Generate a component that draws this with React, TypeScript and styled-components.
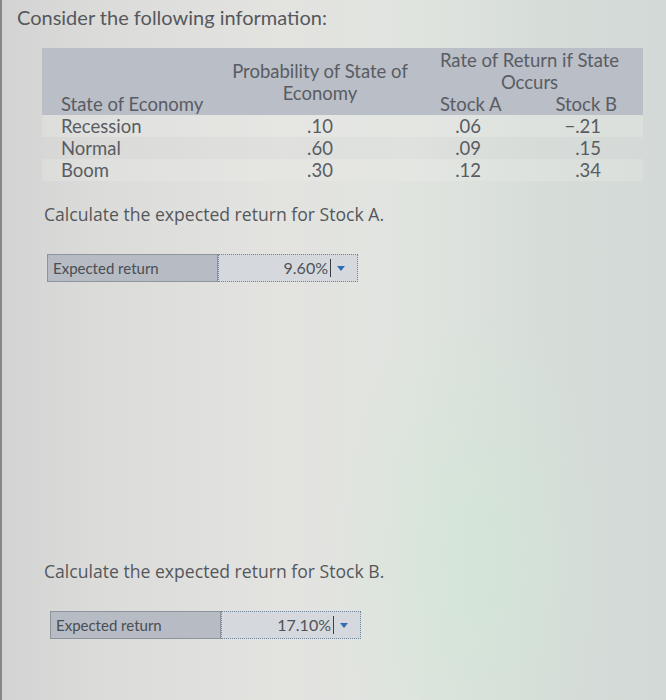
import React from "react";
import styled, { createGlobalStyle } from "styled-components";

const Global = createGlobalStyle`
  html, body { margin: 0; padding: 0; }
  body { background: #d9dad8; }
`;

const Page = styled.div`
  width: 664px;
  height: 700px;
  border-left: 2px solid #84868a;
  overflow: hidden;
  font-family: Lato, "Liberation Sans", sans-serif;
  color: #595c62;
  background:
    radial-gradient(ellipse 140px 260px at 470px 560px, rgba(205, 232, 212, 0.55), rgba(205, 232, 212, 0) 100%),
    linear-gradient(90deg, #d2d3d2 0%, #dbdcda 14%, #e3e3e0 42%, #e0e4df 62%, #d6ddd9 82%, #d3d9d6 100%);
`;

const Title = styled.div`
  font-size: 20px;
  line-height: 22px;
  padding: 6px 0 0 15px;
  color: #56585c;
`;

const Table = styled.div`
  margin: 20px 0 0 40px;
  width: 601px;
  font-size: 18.5px;
  line-height: 22px;
`;

const Header = styled.div`
  display: grid;
  grid-template-columns: 178px 200px 105px 118px;
  grid-template-rows: 22px 22px 22px;
  background: #b9bec7;
  padding-top: 1px;
`;

const HeadCell = styled.div<{ $col: string; $row: string; $align?: string; $pl?: number; $pr?: number; $pb?: number }>`
  grid-column: ${(p) => p.$col};
  grid-row: ${(p) => p.$row};
  align-self: end;
  white-space: nowrap;
  text-align: ${(p) => p.$align || "left"};
  padding-left: ${(p) => p.$pl || 0}px;
  padding-right: ${(p) => p.$pr || 0}px;
  padding-bottom: ${(p) => p.$pb || 0}px;
`;

const Row = styled.div<{ $shade: string }>`
  display: grid;
  grid-template-columns: 178px 200px 105px 118px;
  height: 22px;
  background: ${(p) => p.$shade};
`;

const Cell = styled.div<{ $align?: string; $pl?: number; $pr?: number }>`
  text-align: ${(p) => p.$align || "left"};
  padding-left: ${(p) => p.$pl || 0}px;
  padding-right: ${(p) => p.$pr || 0}px;
`;

const Question = styled.div<{ $mt: number }>`
  margin: ${(p) => p.$mt}px 0 0 42px;
  font-family: "Open Sans", "Liberation Sans", sans-serif;
  font-size: 17.6px;
  line-height: 22px;
  color: #55575b;
`;

const AnswerRow = styled.div<{ $ml: number }>`
  display: flex;
  margin: 29px 0 0 ${(p) => p.$ml}px;
  height: 28px;
`;

const Label = styled.div`
  width: 171px;
  box-sizing: border-box;
  border: 1px solid #8e949c;
  background: #b7bcc4;
  font-size: 15px;
  line-height: 26px;
  padding-left: 5px;
  color: #4a4d53;
`;

const InputBox = styled.div`
  width: 140px;
  box-sizing: border-box;
  border: 1px dotted #6f86a3;
  background: #d5d9dd;
  display: flex;
  align-items: center;
  justify-content: flex-end;
  padding-right: 12px;
  font-size: 16px;
  color: #4f5257;
`;

const Value = styled.span`
  border-right: 1px solid #3c3f44;
  padding-right: 2px;
  line-height: 18px;
`;

const Caret = styled.span`
  margin-left: 6px;
  width: 0;
  height: 0;
  border-left: 4px solid transparent;
  border-right: 4px solid transparent;
  border-top: 5px solid #2f6cb3;
`;

const rows = [
  { s: "Recession", p: ".10", a: ".06", b: "−.21", shade: "rgba(236,236,233,0.35)" },
  { s: "Normal", p: ".60", a: ".09", b: ".15", shade: "rgba(214,216,214,0.25)" },
  { s: "Boom", p: ".30", a: ".12", b: ".34", shade: "rgba(236,236,233,0.3)" },
];

function Answer({ ml, value }: { ml: number; value: string }) {
  return (
    <AnswerRow $ml={ml}>
      <Label>Expected return</Label>
      <InputBox>
        <Value>{value}</Value>
        <Caret />
      </InputBox>
    </AnswerRow>
  );
}

export default function App() {
  return (
    <>
      <Global />
      <Page>
        <Title>Consider the following information:</Title>
        <Table>
          <Header>
            <HeadCell $col="1" $row="1 / 4" $pl={19}>State of Economy</HeadCell>
            <HeadCell $col="2" $row="1 / 4" $align="center" $pb={11}>
              Probability of State of
              <br />
              Economy
            </HeadCell>
            <HeadCell $col="3 / 5" $row="1 / 3" $align="center" $pr={4}>
              Rate of Return if State
              <br />
              Occurs
            </HeadCell>
            <HeadCell $col="3" $row="3" $pl={20}>Stock A</HeadCell>
            <HeadCell $col="4" $row="3" $align="right" $pr={26}>Stock B</HeadCell>
          </Header>
          {rows.map((r) => (
            <Row key={r.s} $shade={r.shade}>
              <Cell $pl={19}>{r.s}</Cell>
              <Cell $align="center">{r.p}</Cell>
              <Cell $align="right" $pr={44}>{r.a}</Cell>
              <Cell $align="right" $pr={42}>{r.b}</Cell>
            </Row>
          ))}
        </Table>
        <Question $mt={22}>Calculate the expected return for Stock A.</Question>
        <Answer ml={45} value="9.60%" />
        <Question $mt={278}>Calculate the expected return for Stock B.</Question>
        <Answer ml={48} value="17.10%" />
      </Page>
    </>
  );
}
